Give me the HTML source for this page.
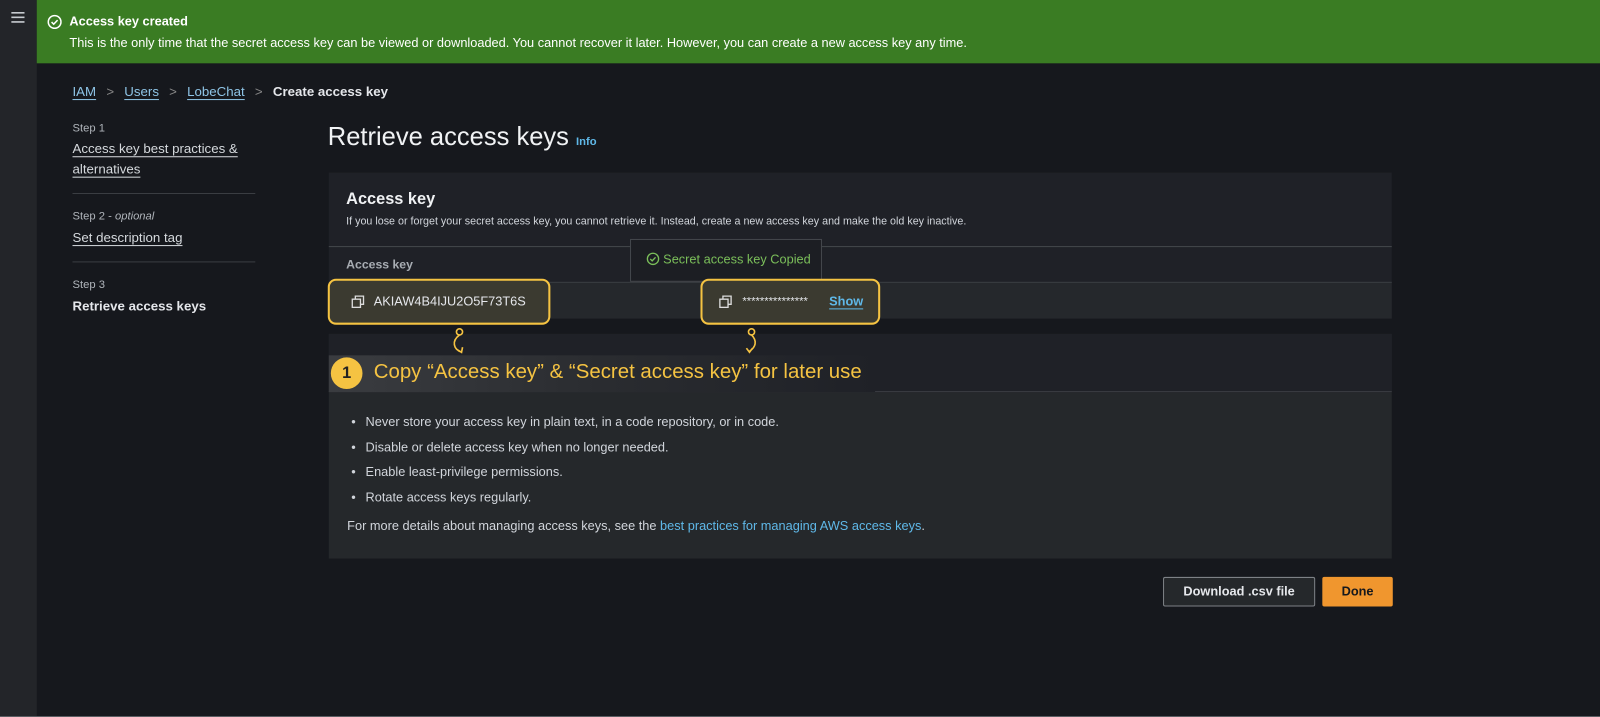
<!DOCTYPE html>
<html><head><meta charset="utf-8"><style>
*{box-sizing:border-box;margin:0;padding:0}
html,body{width:1600px;height:717px;overflow:hidden;background:#16181d}
#w{width:1567px;height:703px;transform:scale(1.0211);transform-origin:0 0;position:relative;font-family:"Liberation Sans",sans-serif;color:#d1d5db}
.a{position:absolute}
.rail{left:0;top:0;width:36px;height:703px;background:#232529}
.banner{left:36px;top:0;width:1531px;height:62px;background:#3a7c23;color:#fff}
.bc{top:82px;font-size:13px}
.bc a{color:#8ec4e6;text-decoration:underline;text-underline-offset:3px}
.step{font-size:11px;color:#b0b5bb}
.sl{font-size:13px;color:#d5d9dd;text-decoration:underline;text-underline-offset:3px;line-height:20px}
.hr{height:1px;background:#3a3d42}
.card{background:#1f2127}
.ul li{list-style:none;font-size:12.5px;color:#d1d5db;height:24.5px;position:relative;padding-left:18px}
.ul li:before{content:"•";position:absolute;left:4px}
.yb{border:2.5px solid #f5c342;border-radius:8px;background:#3b3a30}
</style></head><body><div id="w">
<div class="a rail"></div>
<svg class="a" style="left:11px;top:11px" width="14" height="12"><path d="M0 1.5h13M0 6h13M0 10.5h13" stroke="#c6cacf" stroke-width="1.6"/></svg>
<div class="a banner">
 <svg class="a" style="left:10px;top:14px" width="15" height="15"><circle cx="7.5" cy="7.5" r="6.2" fill="none" stroke="#fff" stroke-width="1.5"/><path d="M4.5 7.6l2.1 2.1 3.8-4" fill="none" stroke="#fff" stroke-width="1.5"/></svg>
 <div class="a" style="left:32px;top:14px;font-size:12.5px;font-weight:bold">Access key created</div>
 <div class="a" style="left:32px;top:35px;font-size:12.5px">This is the only time that the secret access key can be viewed or downloaded. You cannot recover it later. However, you can create a new access key any time.</div>
</div>
<div class="a bc" style="left:71px"><a>IAM</a><span style="color:#888;margin:0 10px">&gt;</span><a>Users</a><span style="color:#888;margin:0 10px">&gt;</span><a>LobeChat</a><span style="color:#888;margin:0 10px">&gt;</span><b style="color:#e5e7eb">Create access key</b></div>

<div class="a step" style="left:71px;top:120px">Step 1</div>
<div class="a sl" style="left:71px;top:136px">Access key best practices &amp;<br>alternatives</div>
<div class="a hr" style="left:71px;top:189px;width:179px"></div>
<div class="a step" style="left:71px;top:206px">Step 2 - <i>optional</i></div>
<div class="a sl" style="left:71px;top:223px">Set description tag</div>
<div class="a hr" style="left:71px;top:256px;width:179px"></div>
<div class="a step" style="left:71px;top:273px">Step 3</div>
<div class="a" style="left:71px;top:292px;font-size:13px;font-weight:bold;color:#e5e7eb">Retrieve access keys</div>

<div class="a" style="left:321px;top:120px;font-size:25px;color:#f0f2f4">Retrieve access keys <span style="font-size:11px;color:#5fb8e8;font-weight:bold">Info</span></div>

<div class="a card" style="left:322px;top:169px;width:1041px;height:143px"></div>
<div class="a" style="left:339px;top:187px;font-size:16px;font-weight:bold;color:#f0f2f4">Access key</div>
<div class="a" style="left:339px;top:211px;font-size:10.5px;color:#d1d5db">If you lose or forget your secret access key, you cannot retrieve it. Instead, create a new access key and make the old key inactive.</div>
<div class="a hr" style="left:322px;top:241px;width:1041px;background:#44474c"></div>
<div class="a" style="left:339px;top:252px;font-size:12px;font-weight:bold;color:#a8adb3">Access key</div>
<div class="a" style="left:322px;top:276px;width:1041px;height:36px;background:#25282c;border-top:1px solid #3a3d42"></div>

<div class="a" style="left:617px;top:234px;width:188px;height:42px;background:#1c1e23;border:1px solid #44474c;color:#7bbf5a;font-size:12.5px;padding:12px 0 0 15px">
<svg style="vertical-align:-2px" width="13" height="13"><circle cx="6.5" cy="6.5" r="5.5" fill="none" stroke="#7bbf5a" stroke-width="1.3"/><path d="M3.8 6.6l1.9 1.9 3.3-3.5" fill="none" stroke="#7bbf5a" stroke-width="1.3"/></svg> Secret access key Copied</div>

<div class="a yb" style="left:321px;top:273px;width:218px;height:45px"></div>
<svg class="a" style="left:344px;top:289px" width="13" height="13"><rect x="1" y="4" width="8" height="8" fill="none" stroke="#ddd" stroke-width="1.3"/><path d="M4 4V1h8v8H9" fill="none" stroke="#ddd" stroke-width="1.3"/></svg>
<div class="a" style="left:366px;top:288px;font-size:12.5px;color:#e5e7eb">AKIAW4B4IJU2O5F73T6S</div>

<div class="a yb" style="left:686px;top:273px;width:176px;height:45px"></div>
<svg class="a" style="left:704px;top:289px" width="13" height="13"><rect x="1" y="4" width="8" height="8" fill="none" stroke="#ddd" stroke-width="1.3"/><path d="M4 4V1h8v8H9" fill="none" stroke="#ddd" stroke-width="1.3"/></svg>
<div class="a" style="left:727px;top:289px;font-size:11px;color:#e5e7eb">***************</div>
<div class="a" style="left:812px;top:288px;font-size:12.5px;font-weight:bold;color:#5fb8e8;text-decoration:underline;text-underline-offset:3px">Show</div>

<div class="a" style="left:322px;top:327px;width:1041px;height:220px;background:#25282b"></div>
<div class="a" style="left:322px;top:327px;width:1041px;height:57px;background:#1f2127;border-bottom:1px solid #3a3d42"></div>
<div class="a" style="left:322px;top:348px;width:535px;height:36px;background:linear-gradient(90deg,#3a3c40 0%,#2a2c30 50%,#1f2127 100%)"></div>
<svg class="a" style="left:430px;top:318px" width="330" height="34" fill="none" stroke="#f5c342" stroke-width="1.6"><circle cx="20" cy="7" r="3"/><path d="M20 10c-8 6-6 14 2 17M17 24l5 3 1-5"/><circle cx="306" cy="7" r="3"/><path d="M306 10c6 6 4 12-2 16M301 23l3 4 3-4"/></svg>
<div class="a" style="left:324px;top:350px;width:31px;height:31px;border-radius:50%;background:#f5c342;color:#222;font-size:16px;font-weight:bold;text-align:center;line-height:31px">1</div>
<div class="a" style="left:366px;top:353px;font-size:20px;color:#f5c342">Copy “Access key” &amp; “Secret access key” for later use</div>

<ul class="a ul" style="left:340px;top:406px">
<li>Never store your access key in plain text, in a code repository, or in code.</li>
<li>Disable or delete access key when no longer needed.</li>
<li>Enable least-privilege permissions.</li>
<li>Rotate access keys regularly.</li>
</ul>
<div class="a" style="left:340px;top:508px;font-size:12.5px">For more details about managing access keys, see the <span style="color:#5fb8e8">best practices for managing AWS access keys</span>.</div>

<div class="a" style="left:1139px;top:565px;width:149px;height:29px;border:1px solid #7d8186;border-radius:2px;background:#25282b;color:#e5e7eb;font-size:12.5px;font-weight:bold;text-align:center;line-height:27px">Download .csv file</div>
<div class="a" style="left:1295px;top:565px;width:69px;height:29px;border-radius:2px;background:#f0962e;color:#16181d;font-size:12.5px;font-weight:bold;text-align:center;line-height:29px">Done</div>
</div>
<div style="position:absolute;left:0;top:716px;width:1600px;height:1px;background:#5a5d62"></div>
</body></html>
